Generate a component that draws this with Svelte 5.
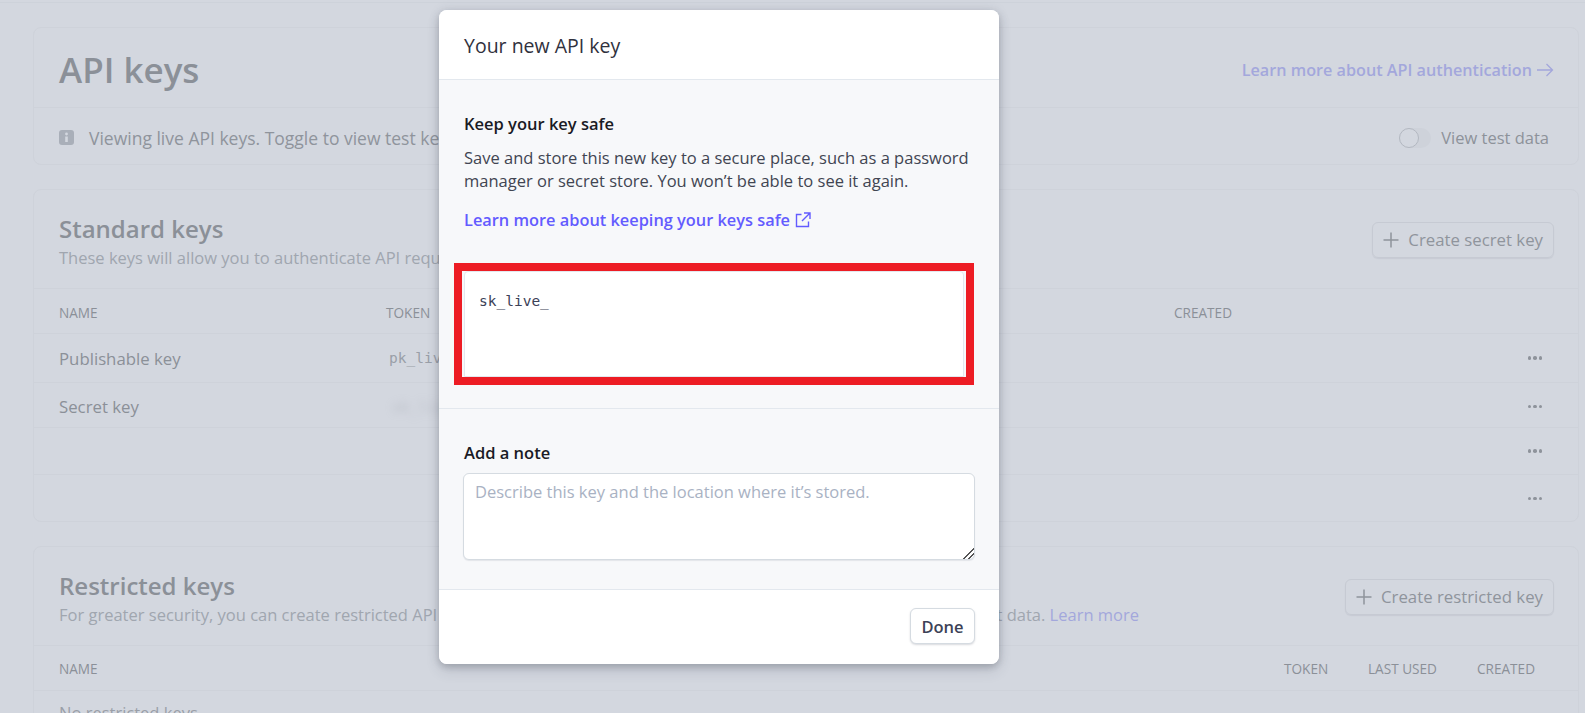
<script lang="ts">
  const standardRows = [
    { name: 'Publishable key', token: 'pk_live_', height: 49, offset: 0 },
    { name: 'Secret key', token: '', blurred: true, height: 45, offset: 3 },
    { name: '', token: '', height: 47, offset: 0 },
    { name: '', token: '', height: 47, offset: 0 },
  ];
</script>

<div class="page">
  <div class="topbar"></div>

  <section class="card intro">
    <div class="intro-head">
      <h1>API keys</h1>
      <span class="top-link">Learn more about API authentication
        <svg width="18" height="14" viewBox="0 0 18 14" fill="none" stroke="currentColor" stroke-width="1.3"><path d="M1 7h15.5M10.5 1l6 6-6 6" /></svg>
      </span>
    </div>
    <div class="intro-foot">
      <svg class="info" width="15" height="15" viewBox="0 0 15 15"><rect width="15" height="15" rx="3" fill="#a9afb9" /><circle cx="7.5" cy="4" r="1.4" fill="#d3d7df" /><rect x="6.2" y="6.5" width="2.6" height="5.5" fill="#d3d7df" /></svg>
      <span class="viewing">Viewing live API keys. Toggle to view test keys.</span>
      <span class="toggle"><span class="knob"></span></span>
      <span class="toggle-label">View test data</span>
    </div>
  </section>

  <section class="card standard">
    <div class="card-head">
      <div>
        <h2>Standard keys</h2>
        <p class="sub">These keys will allow you to authenticate API requests.</p>
      </div>
      <button class="ghost">
        <svg width="16" height="16" viewBox="0 0 16 16" stroke="currentColor" stroke-width="1.5"><path d="M8 .5v15M.5 8h15" /></svg>
        Create secret key
      </button>
    </div>
    <div class="row header-row std-grid">
      <span>NAME</span><span>TOKEN</span><span>CREATED</span><span></span>
    </div>
    {#each standardRows as row}
      <div class="row std-grid body-row" style="height: {row.height}px; padding-top: {row.offset}px">
        <span class="name">{row.name}</span>
        <span class="token" class:blurred={row.blurred}>{row.blurred ? 'sk_live_' : row.token}</span>
        <span></span>
        <span class="dots"><i></i><i></i><i></i></span>
      </div>
    {/each}
  </section>

  <section class="card restricted">
    <div class="card-head">
      <div class="head-text">
        <h2>Restricted keys</h2>
        <p class="sub split">
          <span>For greater security, you can create restricted API keys</span>
          <span>in live or test data. <em>Learn more</em></span>
        </p>
      </div>
      <button class="ghost">
        <svg width="16" height="16" viewBox="0 0 16 16" stroke="currentColor" stroke-width="1.5"><path d="M8 .5v15M.5 8h15" /></svg>
        Create restricted key
      </button>
    </div>
    <div class="row header-row res-grid">
      <span>NAME</span><span>TOKEN</span><span>LAST USED</span><span>CREATED</span>
    </div>
    <div class="empty">No restricted keys</div>
  </section>
</div>

<div class="modal">
  <header class="modal-head">Your new API key</header>
  <div class="modal-section key-section">
    <h3>Keep your key safe</h3>
    <p>Save and store this new key to a secure place, such as a password manager or secret store. You won’t be able to see it again.</p>
    <span class="safe-link">Learn more about keeping your keys safe
      <svg width="16" height="16" viewBox="0 0 16 16" fill="none" stroke="currentColor" stroke-width="1.4"><path d="M6.5 2.5H1.5v12h12v-5M9 1h6v6M15 1L7 9" /></svg>
    </span>
    <div class="redact">
      <div class="key-box">sk_live_</div>
    </div>
  </div>
  <div class="modal-section note-section">
    <h3>Add a note</h3>
    <textarea placeholder="Describe this key and the location where it’s stored."></textarea>
  </div>
  <footer class="modal-foot">
    <button class="done">Done</button>
  </footer>
</div>

<style>
  :global(body) {
    background: #d3d7df;
    font-family: "Open Sans", "Liberation Sans", sans-serif;
    font-size: 16.5px;
    color: #8b9098;
    overflow: hidden;
  }

  .page {
    height: 713px;
    overflow: hidden;
    padding: 0 6px 0 33px;
    box-sizing: border-box;
    display: flex;
    flex-direction: column;
  }

  .topbar {
    height: 2px;
    margin: 0 -6px 24px -33px;
    border-bottom: 1px solid #cdd2da;
    flex: none;
  }

  .card {
    border: 1px solid #ced2da;
    border-radius: 8px;
    flex: none;
    margin-bottom: 24px;
  }

  .intro {
    height: 138px;
    box-sizing: border-box;
  }

  .intro-head {
    height: 80px;
    box-sizing: border-box;
    display: flex;
    align-items: center;
    justify-content: space-between;
    padding: 4px 24px 0 25px;
    border-bottom: 1px solid #ced2da;
  }

  h1 {
    margin: 0;
    font-size: 35px;
    font-weight: 600;
    color: #8b9098;
  }

  .top-link {
    color: #a3a7dc;
    font-size: 16.2px;
    font-weight: 600;
    display: flex;
    align-items: center;
    gap: 4px;
  }

  .intro-foot {
    height: 56px;
    box-sizing: border-box;
    display: flex;
    align-items: center;
    padding: 3px 29px 0 25px;
  }

  .info {
    margin-right: 15px;
  }

  .viewing {
    flex: 1;
    font-size: 17.5px;
    font-weight: 500;
    color: #8f949c;
  }

  .toggle {
    width: 32px;
    height: 20px;
    border-radius: 10px;
    background: #ced2da;
    margin-right: 10px;
    display: block;
  }

  .knob {
    display: block;
    width: 20px;
    height: 20px;
    box-sizing: border-box;
    border-radius: 50%;
    background: #d3d7df;
    border: 1px solid #b3b8c1;
  }

  .toggle-label {
    color: #8d929a;
  }

  .standard {
    height: 333px;
    box-sizing: border-box;
  }

  .standard .header-row {
    padding-top: 2px;
  }

  .card-head {
    height: 99px;
    box-sizing: border-box;
    display: flex;
    align-items: center;
    justify-content: space-between;
    padding: 6px 24px 0 25px;
    border-bottom: 1px solid #ced2da;
  }

  .head-text {
    flex: none;
    width: 1080px;
  }

  h2 {
    margin: 0;
    font-size: 24px;
    line-height: 28px;
    font-weight: 600;
    color: #8b9098;
  }

  .sub {
    margin: 3px 0 0;
    line-height: 24px;
    color: #a0a6af;
  }

  .split {
    display: flex;
    justify-content: space-between;
  }

  .split em {
    font-style: normal;
    color: #a3a7dc;
    font-weight: 500;
  }

  .ghost {
    display: flex;
    align-items: center;
    gap: 9px;
    height: 36px;
    padding: 0 10px;
    margin-bottom: 5px;
    font: inherit;
    font-size: 16.8px;
    font-weight: 500;
    color: #8f949c;
    background: transparent;
    border: 1px solid #c6cad3;
    border-radius: 6px;
    box-shadow: 0 1px 1px rgba(60, 66, 87, 0.08);
    white-space: nowrap;
  }

  .row {
    display: grid;
    align-items: center;
    padding: 0 36px 0 25px;
    border-bottom: 1px solid #ced2da;
    box-sizing: border-box;
  }

  .header-row {
    height: 45px;
    font-size: 13.6px;
    color: #8b9098;
  }

  .std-grid {
    grid-template-columns: 327px 788px 1fr 20px;
  }

  .res-grid {
    grid-template-columns: 1225px 84px 109px 1fr;
  }

  .body-row:last-child {
    border-bottom: none;
  }

  .name {
    font-weight: 500;
    font-size: 16.8px;
  }

  .token {
    padding-left: 3px;
    font-family: "DejaVu Sans Mono", monospace;
    font-size: 14.5px;
    color: #9a9fa8;
    white-space: nowrap;
  }

  .blurred {
    padding-left: 6px;
    filter: blur(4px);
    opacity: 0.5;
  }

  .dots {
    display: flex;
    gap: 2px;
    justify-content: flex-end;
  }

  .dots i {
    width: 3.5px;
    height: 3.5px;
    border-radius: 50%;
    background: #8e939b;
  }

  .restricted .row {
    padding-right: 10px;
  }

  .empty {
    padding: 10px 25px;
    color: #9a9fa8;
  }

  .modal {
    position: absolute;
    top: 10px;
    left: 439px;
    width: 560px;
    height: 654px;
    background: #f7f8fa;
    border-radius: 8px;
    overflow: hidden;
    box-shadow: 0 7px 14px rgba(60, 66, 87, 0.14), 0 3px 6px rgba(0, 0, 0, 0.14), 0 0 12px rgba(60, 66, 87, 0.1);
    display: flex;
    flex-direction: column;
    color: #3c4257;
  }

  .modal-head {
    height: 70px;
    flex: none;
    box-sizing: border-box;
    display: flex;
    align-items: center;
    padding: 2px 25px 0;
    background: #fff;
    border-bottom: 1px solid #e3e8ee;
    font-size: 19.5px;
    color: #30313d;
  }

  .modal-section {
    padding: 32px 24px 0 25px;
    box-sizing: border-box;
    flex: none;
  }

  .key-section {
    height: 329px;
    border-bottom: 1px solid #e3e8ee;
  }

  .note-section {
    height: 180px;
  }

  h3 {
    margin: 0;
    font-size: 16.5px;
    line-height: 24px;
    font-weight: 600;
    color: #1a1b25;
  }

  .key-section p {
    margin: 10px 0 16px;
    line-height: 23px;
    color: #414552;
  }

  .safe-link {
    display: flex;
    align-items: center;
    gap: 5px;
    height: 24px;
    font-size: 16.35px;
    font-weight: 600;
    color: #635bff;
  }

  .redact {
    margin: 31px 1px 0 -10px;
    height: 122px;
    box-sizing: border-box;
    border: 8px solid #ed1c24;
    padding: 0 2px;
  }

  .key-box {
    height: 100%;
    box-sizing: border-box;
    background: #fff;
    border: 1px solid #e3e8ee;
    border-radius: 4px 4px 0 0;
    padding: 19px 14px;
    font-family: "DejaVu Sans Mono", monospace;
    font-size: 14.5px;
    line-height: 20px;
    color: #3c4257;
  }

  textarea {
    display: block;
    width: 512px;
    height: 87px;
    margin: 8px 0 0 -1px;
    box-sizing: border-box;
    padding: 6px 11px;
    font: inherit;
    line-height: 24px;
    background: #fff;
    border: 1px solid #d5dbe1;
    border-radius: 6px;
    box-shadow: 0 1px 1px rgba(60, 66, 87, 0.1);
  }

  textarea::placeholder {
    color: #a9b2c3;
    opacity: 1;
  }

  textarea::-webkit-resizer {
    background: linear-gradient(135deg, transparent 62%, #555 62% 68%, transparent 68% 79%, #555 79% 85%, transparent 85%);
  }

  .modal-foot {
    flex: 1;
    display: flex;
    justify-content: flex-end;
    align-items: flex-start;
    padding: 18px 24px 0;
    background: #fff;
    border-top: 1px solid #e3e8ee;
  }

  .done {
    width: 65px;
    height: 36px;
    padding: 0;
    font: inherit;
    font-weight: 600;
    color: #3c4257;
    background: #fff;
    border: 1px solid #d5dbe1;
    border-radius: 6px;
    box-shadow: 0 1px 2px rgba(60, 66, 87, 0.2);
  }
</style>
